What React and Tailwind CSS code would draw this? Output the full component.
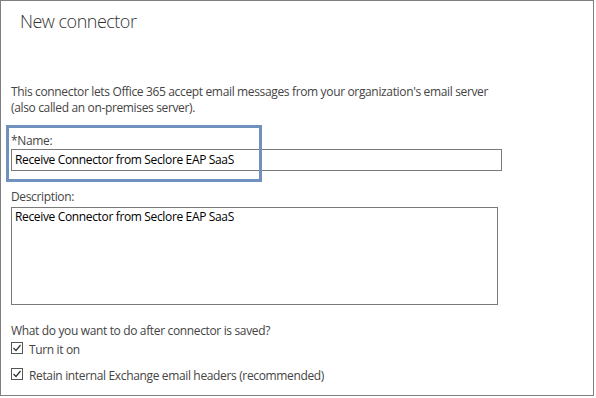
import React from 'react';

function Check({ label }) {
  return (
    <label className="flex items-start gap-[6px] h-[26px]">
      <span className="mt-[3px] w-[12px] h-[12px] border border-[#555] bg-white flex items-center justify-center shrink-0">
        <svg width="10" height="10" viewBox="0 0 10 10">
          <path d="M1.5 5 L4 7.5 L8.5 2" fill="none" stroke="#333" strokeWidth="1.2" />
        </svg>
      </span>
      <span className="mt-[3px] text-[12px] leading-[16px] text-[#444]">{label}</span>
    </label>
  );
}

export default function App() {
  return (
    <div className="w-[596px] h-[398px] bg-white" style={{ fontFamily: '"Open Sans", "Noto Sans", sans-serif', letterSpacing: '-0.35px' }}>
      <div className="w-[594px] h-[396px] border border-[#7f7f7f] flex flex-col">
        {/* Header */}
        <div className="pl-[19px] pt-[6px] h-[83px] shrink-0">
          <h1 className="text-[18px] font-light text-[#333] leading-[28px] tracking-[-0.5px]">New connector</h1>
        </div>

        {/* Body */}
        <div className="pl-[10px]">
          <p className="text-[12px] leading-[16px] text-[#444] w-[500px]">
            This connector lets Office 365 accept email messages from your organization's email server (also called an on-premises server).
          </p>

          <div className="relative mt-[17px]">
            <div className="absolute left-[-5px] top-[-8px] w-[256px] h-[57px] border-[3px] border-[#7090bd] pointer-events-none" />
            <div className="text-[12px] text-[#444] leading-[16px]">*Name:</div>
            <div className="w-[491px] h-[22px] border border-[#7a7a7a] flex items-center px-[3px] text-[12px] leading-[16px] text-black">
              Receive Connector from Seclore EAP SaaS
            </div>
          </div>

          <div className="text-[12px] text-[#444] leading-[16px] mt-[18px]">Description:</div>
          <div className="mt-[2px] w-[487px] h-[98px] border border-[#7a7a7a] px-[3px] pt-[1px] text-[12px] text-black leading-[16px]">
            Receive Connector from Seclore EAP SaaS
          </div>

          <div className="text-[12px] text-[#444] leading-[16px] mt-[18px]">What do you want to do after connector is saved?</div>
          <Check label="Turn it on" />
          <Check label="Retain internal Exchange email headers (recommended)" />
        </div>
      </div>
    </div>
  );
}
